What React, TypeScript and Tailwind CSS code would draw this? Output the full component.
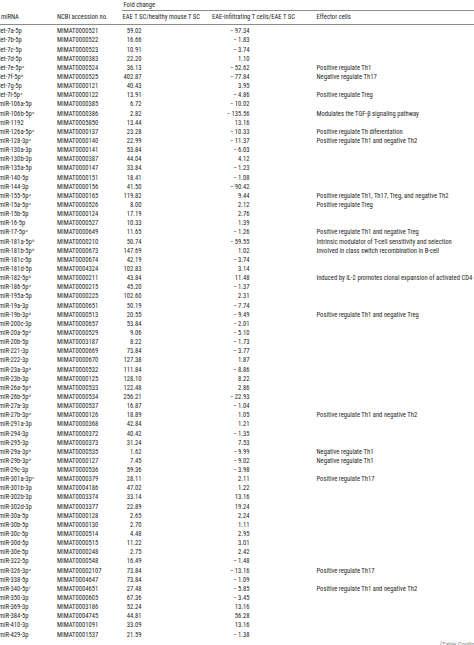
type Row = [string, string, string, string, string, string]

// miRNA, superscript, accession, EAE/healthy, infiltrating/EAE, effector
const rows: Row[] = [
  ['let-7a-5p', '', 'MIMAT0000521', '59.02', '-97.34', ''],
  ['let-7b-5p', '', 'MIMAT0000522', '16.66', '-1.83', ''],
  ['let-7c-5p', '', 'MIMAT0000523', '10.91', '-3.74', ''],
  ['let-7d-5p', '', 'MIMAT0000383', '22.20', '1.10', ''],
  ['let-7e-5p', 'a', 'MIMAT0000524', '36.13', '-52.62', 'Positive regulate Th1'],
  ['let-7f-5p', 'b', 'MIMAT0000525', '402.87', '-77.84', 'Negative regulate Th17'],
  ['let-7g-5p', '', 'MIMAT0000121', '40.43', '3.95', ''],
  ['let-7i-5p', 'c', 'MIMAT0000122', '13.91', '-4.86', 'Positive regulate Treg'],
  ['miR-106a-5p', '', 'MIMAT0000385', '6.72', '-10.02', ''],
  ['miR-106b-5p', 'a', 'MIMAT0000386', '2.82', '-135.56', 'Modulates the TGF-β signaling pathway'],
  ['miR-1192', '', 'MIMAT0005850', '13.44', '13.16', ''],
  ['miR-126a-5p', 'a', 'MIMAT0000137', '23.28', '-10.33', 'Positive regulate Th diferentation'],
  ['miR-128-3p', 'a', 'MIMAT0000140', '22.99', '-11.37', 'Positive regulate Th1 and negative Th2'],
  ['miR-130a-3p', '', 'MIMAT0000141', '53.84', '-6.03', ''],
  ['miR-130b-3p', '', 'MIMAT0000387', '44.04', '4.12', ''],
  ['miR-135a-5p', '', 'MIMAT0000147', '33.84', '-1.23', ''],
  ['miR-140-5p', '', 'MIMAT0000151', '18.41', '-1.08', ''],
  ['miR-144-3p', '', 'MIMAT0000156', '41.50', '-90.42', ''],
  ['miR-155-5p', 'a', 'MIMAT0000165', '119.82', '9.44', 'Positive regulate Th1, Th17, Treg, and negative Th2'],
  ['miR-15a-5p', 'c', 'MIMAT0000526', '8.00', '2.12', 'Positive regulate Treg'],
  ['miR-15b-5p', '', 'MIMAT0000124', '17.19', '2.76', ''],
  ['miR-16-5p', '', 'MIMAT0000527', '10.33', '1.39', ''],
  ['miR-17-5p', 'a', 'MIMAT0000649', '11.65', '-1.26', 'Positive regulate Th1 and negative Treg'],
  ['miR-181a-5p', 'b', 'MIMAT0000210', '50.74', '-59.55', 'Intrinsic modulator of T-cell sensitivity and selection'],
  ['miR-181b-5p', 'b', 'MIMAT0000673', '147.69', '1.02', 'Involved in class switch recombination in B-cell'],
  ['miR-181c-5p', '', 'MIMAT0000674', '42.19', '-3.74', ''],
  ['miR-181d-5p', '', 'MIMAT0004324', '102.83', '3.14', ''],
  ['miR-182-5p', 'b', 'MIMAT0000211', '43.84', '11.48', 'Induced by IL-2 promotes clonal expansion of activated CD4 cells'],
  ['miR-186-5p', 'a', 'MIMAT0000215', '45.20', '-1.37', ''],
  ['miR-195a-5p', '', 'MIMAT0000225', '102.60', '2.31', ''],
  ['miR-19a-3p', '', 'MIMAT0000651', '50.19', '-7.74', ''],
  ['miR-19b-3p', 'b', 'MIMAT0000513', '20.55', '-9.49', 'Positive regulate Th1 and negative Treg'],
  ['miR-200c-3p', '', 'MIMAT0000657', '53.84', '-2.01', ''],
  ['miR-20a-5p', 'b', 'MIMAT0000529', '9.06', '-5.10', ''],
  ['miR-20b-5p', '', 'MIMAT0003187', '8.22', '-1.73', ''],
  ['miR-221-3p', '', 'MIMAT0000669', '73.84', '-3.77', ''],
  ['miR-222-3p', '', 'MIMAT0000670', '127.38', '1.87', ''],
  ['miR-23a-3p', 'b', 'MIMAT0000532', '111.84', '-8.86', ''],
  ['miR-23b-3p', '', 'MIMAT0000125', '128.10', '8.22', ''],
  ['miR-26a-5p', 'b', 'MIMAT0000533', '122.48', '2.86', ''],
  ['miR-26b-5p', 'b', 'MIMAT0000534', '256.21', '-22.93', ''],
  ['miR-27a-3p', '', 'MIMAT0000537', '16.87', '-1.04', ''],
  ['miR-27b-3p', 'a', 'MIMAT0000126', '18.89', '1.05', 'Positive regulate Th1 and negative Th2'],
  ['miR-291a-3p', '', 'MIMAT0000368', '42.84', '1.21', ''],
  ['miR-294-3p', '', 'MIMAT0000372', '40.42', '-1.35', ''],
  ['miR-295-3p', '', 'MIMAT0000373', '31.24', '7.53', ''],
  ['miR-29a-3p', 'b', 'MIMAT0000535', '1.62', '-9.99', 'Negative regulate Th1'],
  ['miR-29b-3p', 'b', 'MIMAT0000127', '7.45', '-9.02', 'Negative regulate Th1'],
  ['miR-29c-3p', '', 'MIMAT0000536', '59.36', '-3.98', ''],
  ['miR-301a-3p', 'c', 'MIMAT0000379', '28.11', '2.11', 'Positive regulate Th17'],
  ['miR-301b-3p', '', 'MIMAT0004186', '47.02', '1.22', ''],
  ['miR-302b-3p', '', 'MIMAT0003374', '33.14', '13.16', ''],
  ['miR-302d-3p', '', 'MIMAT0003377', '22.89', '19.24', ''],
  ['miR-30a-5p', '', 'MIMAT0000128', '2.65', '2.24', ''],
  ['miR-30b-5p', '', 'MIMAT0000130', '2.70', '1.11', ''],
  ['miR-30c-5p', '', 'MIMAT0000514', '4.48', '2.95', ''],
  ['miR-30d-5p', '', 'MIMAT0000515', '11.22', '3.01', ''],
  ['miR-30e-5p', '', 'MIMAT0000248', '2.75', '2.42', ''],
  ['miR-322-5p', '', 'MIMAT0000548', '16.49', '-1.48', ''],
  ['miR-326-3p', 'a', 'MIMAT00002107', '73.84', '-13.16', 'Positive regulate Th17'],
  ['miR-338-5p', '', 'MIMAT0004647', '73.84', '-1.09', ''],
  ['miR-340-5p', 'f', 'MIMAT0004651', '27.48', '-5.85', 'Positive regulate Th1 and negative Th2'],
  ['miR-350-3p', '', 'MIMAT0000605', '67.36', '-3.45', ''],
  ['miR-369-3p', '', 'MIMAT0003186', '52.24', '13.16', ''],
  ['miR-384-5p', '', 'MIMAT0004745', '44.81', '56.28', ''],
  ['miR-410-3p', '', 'MIMAT0001091', '33.09', '13.16', ''],
  ['miR-429-3p', '', 'MIMAT0001537', '21.59', '-1.38', ''],
]

function Num({ v }: { v: string }) {
  if (!v.startsWith('-')) return <span>{v}</span>
  return (
    <span>
      −<span className="ml-[1.5px]">{v.slice(1)}</span>
    </span>
  )
}

export default function App() {
  return (
    <div className="w-[474px] h-[645px] overflow-hidden bg-white text-[#262626] text-[6.6px] whitespace-nowrap font-[family-name:'Roboto_Condensed','DejaVu_Sans_Condensed','Liberation_Sans',sans-serif]">
      {/* Fold change spanning header */}
      <div className="h-[10px] pl-[123.5px] leading-[10px]">Fold change</div>
      <div className="ml-[122px] h-px bg-[#8c8c8c]" />

      {/* column headers */}
      <div className="flex h-[13px] items-center">
        <div className="w-[57px] shrink-0 pl-[1px]">miRNA</div>
        <div className="w-[65.5px] shrink-0">NCBI accession no.</div>
        <div className="w-[89.5px] shrink-0">EAE T SC/healthy mouse T SC</div>
        <div className="w-[104.5px] shrink-0">EAE-infiltrating T cells/EAE T SC</div>
        <div className="shrink-0">Effector cells</div>
      </div>
      <div className="h-px bg-[#8c8c8c]" />

      <div className="pt-[2.7px]">
        {rows.map(([name, sup, acc, a, b, eff]) => (
          <div key={name} className="flex h-[9.15px] items-center">
            <div className="-ml-[1px] w-[58px] shrink-0">
              {name}
              {sup && <span className="relative -top-[2px] ml-[0.5px] text-[4px] italic">{sup}</span>}
            </div>
            <div className="w-[65px] shrink-0">{acc}</div>
            <div className="flex w-[19.5px] shrink-0 justify-end">
              <Num v={a} />
            </div>
            <div className="flex w-[108px] shrink-0 justify-end">
              <Num v={b} />
            </div>
            <div className="shrink-0 pl-[67px]">{eff}</div>
          </div>
        ))}
      </div>

      <div className="mt-[1px] pl-[440px] text-[#8a8a8a]">(Table Continues)</div>
    </div>
  )
}
